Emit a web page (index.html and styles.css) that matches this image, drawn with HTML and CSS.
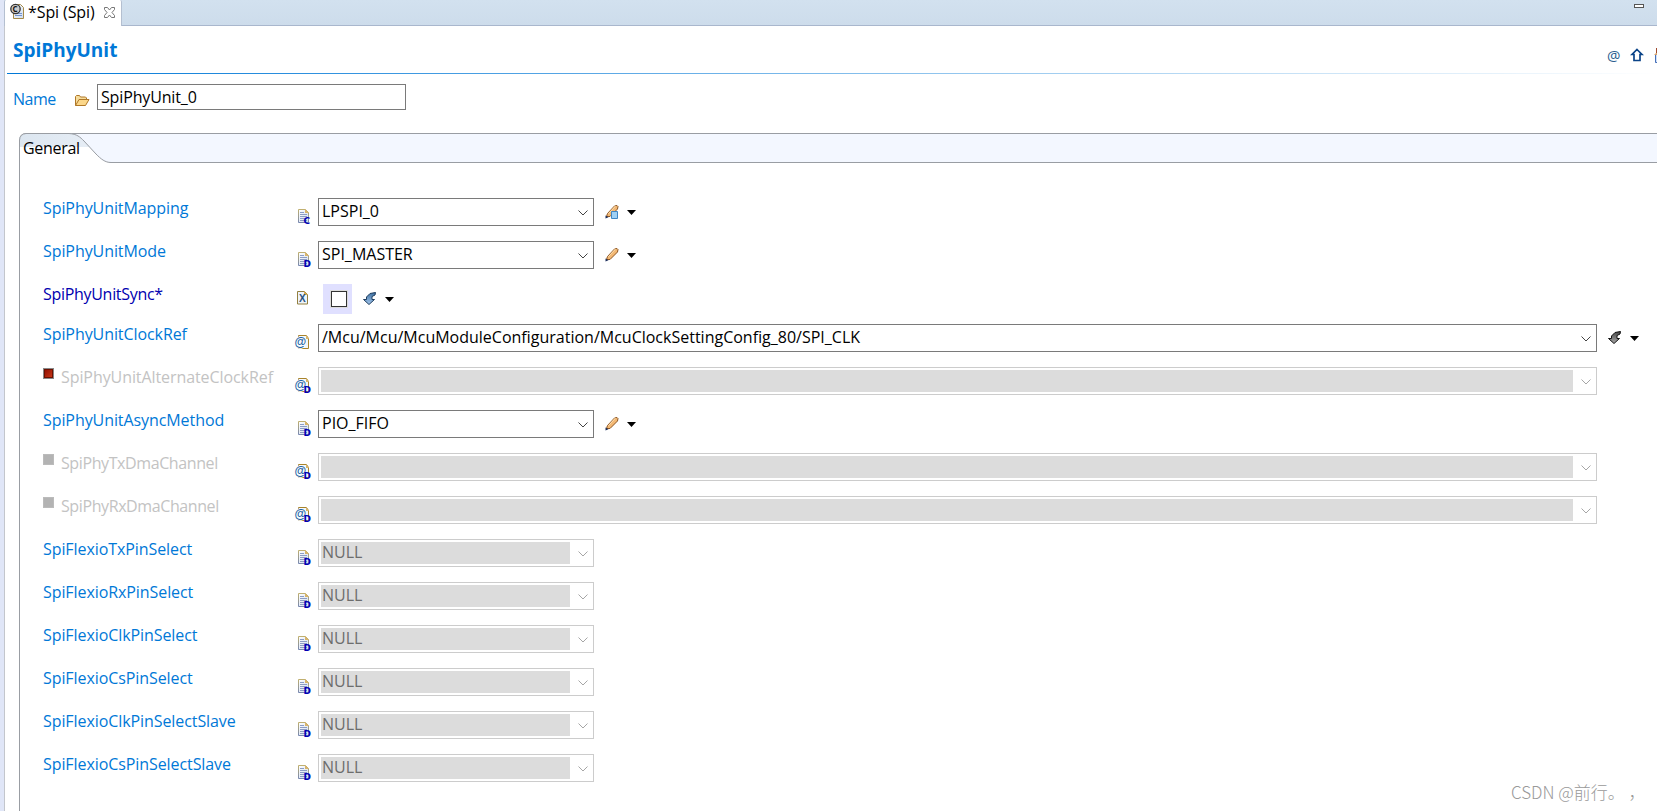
FILE: index.html
```html
<!doctype html>
<html lang="en">
<head>
	<meta charset="utf-8">
	<meta name="viewport" content="width=device-width, initial-scale=1">
	<title>*Spi (Spi)</title>
	<link rel="stylesheet" href="styles.css">
</head>
<body>

<svg class="defs" width="0" height="0">
	<defs>
		<linearGradient id="paper" x1="0" y1="0" x2="1" y2="1">
			<stop offset="0" stop-color="#ffffff"/><stop offset="1" stop-color="#cfdcee"/>
		</linearGradient>
		<linearGradient id="edge" x1="0" y1="0" x2="0" y2="1">
			<stop offset="0" stop-color="#c0b070"/><stop offset="1" stop-color="#7888b0"/>
		</linearGradient>
		<linearGradient id="tabfill" x1="0" y1="0" x2="1" y2="0">
			<stop offset="0" stop-color="#dce6f0"/><stop offset="1" stop-color="#e6edf5"/>
		</linearGradient>
		<linearGradient id="blue" x1="0" y1="0" x2="0" y2="1">
			<stop offset="0" stop-color="#3c6ea0"/><stop offset="1" stop-color="#a4c8ee"/>
		</linearGradient>
		<linearGradient id="dark" x1="0" y1="0" x2="0" y2="1">
			<stop offset="0" stop-color="#444"/><stop offset="1" stop-color="#aaa"/>
		</linearGradient>
	</defs>
	<symbol id="i-doc" viewBox="0 0 16 16">
		<path d="M3.5 1.5h7l3 3v10h-10z" fill="url(#paper)" stroke="url(#edge)"/>
		<path d="M10 1l4 4h-4z" fill="#d8b46a"/>
		<path d="M5 4.5h4M5 6.5h7M5 8.5h7M5 10.5h7M5 12.5h7" stroke="#8c9cc4"/>
	</symbol>
	<symbol id="i-page" viewBox="0 0 16 16">
		<path d="M3.5 1.5h8l2 3v10h-10z" fill="#f2f5fa"/>
		<path d="M3.5 3.5v-2h8l2 3v10h-10v-2" fill="none" stroke="#a8842c"/>
		<path d="M11 1l3 4h-3z" fill="#d8b46a"/>
	</symbol>
	<symbol id="i-x" viewBox="0 0 16 16">
		<path d="M2.5 1.5h7l3 3v9.500h-10z" fill="#edf3fb" stroke="#93803f"/>
		<path d="M9 1l4 4h-4z" fill="#d8a850"/>
	</symbol>
	<symbol id="i-pencil" viewBox="0 0 16 16">
		<path d="M2.5 12.5l1-3 7-7.500 2.500-.5 1 1-.5 2.500-7.500 7.500z" fill="#f3b874" stroke="#8d5622"/>
		<path d="M4.500 9.500l7-7.500" stroke="#ffe2b4"/>
		<path d="M1.500 14.500v-3l3 1.700z" fill="#1c2e5c"/>
	</symbol>
	<symbol id="i-bolt" viewBox="0 0 16 16">
		<path d="M4.500 8.500V6L8 2.500l5.500-1-.5 2.500-3 1.500v3h2.500L7 13.500 1.500 8.500z"/>
	</symbol>
	<symbol id="i-chevron" viewBox="0 0 10 6">
		<path d="M.5.5L5 5 9.500.5" fill="none" stroke="currentColor"/>
	</symbol>
	<symbol id="i-arrow" viewBox="0 0 9 5"><path d="M0 0h9L4.500 5z"/></symbol>
</svg>

<div class="editor">
	<header class="tabbar">
		<div class="tab">
			<svg class="tab-icon" viewBox="0 0 16 16">
				<path d="M4.500 1.500h7l3 3v11h-10z" fill="url(#paper)" stroke="#a58a48"/>
				<path d="M6 10.500h7M6 12.500h7" stroke="#7294d0"/>
				<circle cx="6.500" cy="6" r="4.700" fill="#ccc" stroke="#333" stroke-width="1.300"/>
				<text x="3.500" y="9" font-size="8" font-weight="700" fill="#111">C</text>
			</svg>
			<span>*Spi (Spi)</span>
			<svg class="tab-close" viewBox="0 0 11 11"><path d="M.5.5h3l2 2.500 2-2.500h3v2L8 5.500l2.500 3v2h-3l-2-2.500-2 2.500h-3v-2L3 5.500.5 2.500z" fill="#fff" stroke="#777"/></svg>
		</div>
		<i class="minimize"></i>
	</header>

	<div class="heading">
		<h1>SpiPhyUnit</h1>
		<div class="heading-tools">
			<span class="at">@</span>
			<svg class="up" viewBox="0 0 14 14"><path d="M7 1.500l5 5H10v6H4v-6H2z" fill="#fff" stroke="#0b4488" stroke-width="1.700"/></svg>
			<svg class="home" viewBox="0 0 14 16"><path d="M1.500 7.500h11v8h-11z" fill="#cfe0fa" stroke="#4670b8"/><path d="M0 8l7-7 7 7z" fill="#d8a46c"/><path d="M2 1h2v5H2z" fill="#a04a30"/></svg>
		</div>
	</div>
	<div class="rule"></div>

	<div class="name-row">
		<label for="name">Name</label>
		<svg class="folder" viewBox="0 0 16 13">
			<path d="M1.500 11.500v-9l1-1h3l1 1.500h5l1 1v2" fill="#f6dc9c" stroke="#b07828"/>
			<path d="M1.500 11.500l3.500-6h10l-3.500 6z" fill="#fbd78a" stroke="#b07828"/>
		</svg>
		<input id="name" class="name-input" type="text" value="SpiPhyUnit_0">
	</div>

	<div class="folder-tabs">
		<svg class="tab-shape" viewBox="0 0 95 30">
			<path d="M0 30V7L6 1H50C58 1 61 4 65 8L77 21C82 26 86 29.500 92 29.500H95V30z" fill="#fff"/>
			<path d="M.5 14V7Q1 1 7 .5H50C58 1 61 4 65 8L71 14z" fill="url(#tabfill)"/>
			<path d="M.5 30V7Q1 1 7 .5H50C58 1 61 4 65 8L77 21C82 26 86 29.500 92 29.500H95" fill="none" stroke="#999da3"/>
		</svg>
		<span class="general">General</span>
	</div>

	<main id="form" class="form"></main>
</div>

<div class="watermark">CSDN @前行。 ，</div>

<script>
const fields = [
	{label: "SpiPhyUnitMapping", icon: "doc", mark: "C", value: "LPSPI_0", tool: "calc"},
	{label: "SpiPhyUnitMode", icon: "doc", mark: "D", value: "SPI_MASTER", tool: "pencil"},
	{label: "SpiPhyUnitSync*", icon: "x", check: true, tool: "bolt"},
	{label: "SpiPhyUnitClockRef", icon: "page", value: "/Mcu/Mcu/McuModuleConfiguration/McuClockSettingConfig_80/SPI_CLK", wide: true, tool: "bolt"},
	{label: "SpiPhyUnitAlternateClockRef", icon: "page", mark: "D", value: "", wide: true, off: true, box: "red"},
	{label: "SpiPhyUnitAsyncMethod", icon: "doc", mark: "D", value: "PIO_FIFO", tool: "pencil"},
	{label: "SpiPhyTxDmaChannel", icon: "page", mark: "D", value: "", wide: true, off: true, box: "grey"},
	{label: "SpiPhyRxDmaChannel", icon: "page", mark: "D", value: "", wide: true, off: true, box: "grey"},
	{label: "SpiFlexioTxPinSelect", icon: "doc", mark: "D", value: "NULL", off: true},
	{label: "SpiFlexioRxPinSelect", icon: "doc", mark: "D", value: "NULL", off: true},
	{label: "SpiFlexioClkPinSelect", icon: "doc", mark: "D", value: "NULL", off: true},
	{label: "SpiFlexioCsPinSelect", icon: "doc", mark: "D", value: "NULL", off: true},
	{label: "SpiFlexioClkPinSelectSlave", icon: "doc", mark: "D", value: "NULL", off: true},
	{label: "SpiFlexioCsPinSelectSlave", icon: "doc", mark: "D", value: "NULL", off: true}
];

function typeIcon(f) {
	let extra = "";
	if (f.icon == "page") extra += '<text class="ref" x="-.5" y="12">@</text>';
	if (f.icon == "x") extra += '<text class="x" x="4" y="12">X</text>';
	if (f.mark) extra += '<text class="mark" x="8.500" y="15.500">' + f.mark + '</text>';
	return '<svg class="type" viewBox="0 0 16 16"><use href="#i-' + f.icon + '"/>' + extra + '</svg>';
}

function control(f) {
	if (f.check) return '<span class="check"><i></i></span>';
	return '<div class="combo' + (f.wide ? " wide" : "") + (f.off ? " off" : "") + '"><span>' + f.value +
		'</span><svg class="chevron"><use href="#i-chevron"/></svg></div>';
}

function tools(f) {
	if (!f.tool) return "";
	let name = f.tool == "calc" ? "pencil" : f.tool;
	let extra = f.tool == "calc" ? '<path d="M7.500 7.500h6v7h-6z" fill="#9fd0f4" stroke="#3f86c4"/>' : "";
	return '<div class="tools"><svg class="tool ' + f.tool + (f.wide ? " dark" : "") + '" viewBox="0 0 16 16"><use href="#i-' + name + '"/>' +
		extra + '</svg><svg class="arrow"><use href="#i-arrow"/></svg></div>';
}

document.querySelector("#form").innerHTML = fields.map(f =>
	'<div class="field' + (f.check ? " sync" : "") + (f.box ? " optional" : "") + '">' +
	'<div class="label">' + (f.box ? '<i class="box ' + f.box + '"></i>' : "") + '<span>' + f.label + '</span></div>' +
	typeIcon(f) + control(f) + tools(f) + '</div>'
).join("");
</script>
</body>
</html>
```
FILE: styles.css
```css
* {
	box-sizing: border-box;
}

body {
	margin: 0;
	height: 811px;
	overflow: hidden;
	background: #fff;
	color: #000;
	font: 16px/22px "Open Sans", "Noto Sans", "Noto Sans CJK SC", sans-serif;
}

svg {
	display: block;
	flex: none;
}

.defs {
	position: absolute;
}

.editor {
	height: 811px;
	border-left: 4px solid #e0e6f7;
	box-shadow: inset 1px 0 #c3c6cc;
	overflow: hidden;
}

.tabbar {
	display: flex;
	justify-content: space-between;
	height: 26px;
	padding-right: 13px;
	background: linear-gradient(#d2e1ef, #cddceb);
	box-shadow: inset 0 -1px #a9b7cd;
}

.tab {
	display: flex;
	width: 118px;
	padding-left: 4px;
	background: #fff;
	border: solid #b4bfd0;
	border-width: 0 1px;
	border-radius: 2px 2px 0 0;
	line-height: 25px;
	letter-spacing: -.1px;
}

.tab span {
	width: 76px;
	margin-left: 3px;
	white-space: nowrap;
}

.tab-icon {
	width: 16px;
	height: 16px;
	margin-top: 3px;
}

.tab-close {
	width: 11px;
	height: 11px;
	margin-top: 7px;
}

.minimize {
	width: 10px;
	height: 4px;
	margin-top: 4px;
	border: 1px solid #555;
	background: #fff;
}

.heading {
	display: flex;
	justify-content: space-between;
	height: 47px;
	padding-left: 9px;
}

h1 {
	margin: 11px 0 0;
	color: #0078d7;
	font-size: 19px;
	line-height: 26px;
}

.heading-tools {
	display: flex;
	width: 50px;
	padding-top: 22px;
	overflow: hidden;
}

.at {
	flex: none;
	width: 23px;
	margin-top: -4px;
	color: #2c6090;
	font-size: 15px;
}

.up {
	width: 14px;
	height: 14px;
}

.home {
	width: 14px;
	height: 16px;
	margin: -1px 0 0 10px;
}

.rule {
	height: 1px;
	margin-left: 3px;
	background: linear-gradient(90deg, #0078d7, #fff);
}

.name-row {
	display: flex;
	height: 59px;
	padding: 10px 0 0 9px;
	color: #0078d7;
}

.name-row label {
	width: 61px;
	padding-top: 4px;
	letter-spacing: -.5px;
}

.folder {
	width: 16px;
	height: 13px;
	margin: 10px 7px 0 0;
}

.name-input {
	width: 309px;
	height: 26px;
	padding: 0 3px;
	border: 1px solid #7a7a7a;
	font: inherit;
	letter-spacing: -.15px;
}

.folder-tabs {
	display: flex;
	height: 30px;
	margin-left: 15px;
	border: solid #999da3;
	border-width: 1px 0;
	border-top-left-radius: 7px;
	background: #f3f7ff;
}

.tab-shape {
	width: 95px;
	height: 30px;
	margin-top: -1px;
}

.general {
	margin: 3px 0 0 -91px;
	letter-spacing: -.3px;
	z-index: 1;
}

.form {
	height: 660px;
	margin-left: 15px;
	padding: 35px 0 0 23px;
	border-left: 1px solid #999da3;
}

.field {
	display: flex;
	height: 43px;
}

.field.sync {
	height: 40px;
}

.label {
	display: flex;
	width: 252px;
	margin-top: -1px;
	color: #0078d7;
	letter-spacing: -.08px;
	white-space: nowrap;
}

.sync .label {
	color: #0000b0;
	letter-spacing: -.3px;
}

.optional .label {
	color: #c3c3c3;
}

.box {
	width: 11px;
	height: 11px;
	margin: 2px 7px 0 0;
	border: 1px solid #bbb;
	background: #b3b3b3;
}

.box.grey + span {
	letter-spacing: -.4px;
}

.box.red {
	border-color: #888;
	background: linear-gradient(135deg, #8c0c00, #cc3a18);
	box-shadow: inset 0 0 0 1px #6c1000;
}

.type {
	width: 16px;
	height: 16px;
	margin: 10px 7px 0 0;
	overflow: visible;
}

.sync .type {
	margin: 6px 12px 0 0;
}

.mark {
	font: bold 9px "DejaVu Sans", sans-serif;
	fill: #0000b4;
}

.ref {
	font: bold 12px "Liberation Sans", sans-serif;
	fill: #1e64a4;
	stroke: #fff;
	stroke-width: 1.5px;
	paint-order: stroke;
}

.x {
	font: bold 10px "Liberation Sans", sans-serif;
	fill: #26507c;
}

.combo {
	display: flex;
	justify-content: space-between;
	width: 276px;
	height: 28px;
	padding: 2px 5px 2px 2px;
	border: 1px solid #7a7a7a;
	color: #000;
}

.combo.wide {
	width: 1279px;
}

.combo span {
	flex: 1;
	margin-right: 8px;
	padding-left: 1px;
	line-height: 21px;
	white-space: nowrap;
}

.chevron {
	width: 10px;
	height: 6px;
	margin-top: 9px;
	color: #444;
}

.combo.off {
	border-color: #ccc;
	color: #6d6d6d;
}

.combo.off span {
	background: #dcdcdc;
}

.off .chevron {
	color: #a6a6a6;
}

.check {
	width: 29px;
	height: 30px;
	padding: 7px 0 0 8px;
	background: #e0e0ff;
}

.check i {
	display: block;
	width: 16px;
	height: 16px;
	border: 1px solid #333;
	background: #fff;
	box-shadow: 0 0 0 1px #dcdcdc;
}

.tools {
	display: flex;
	padding: 6px 0 0 10px;
}

.tool {
	width: 16px;
	height: 16px;
}

.bolt {
	fill: url(#blue);
	stroke: #1d3c5e;
}

.bolt.dark {
	fill: url(#dark);
	stroke: #111;
}

.arrow {
	width: 9px;
	height: 5px;
	margin: 6px 0 0 7px;
}

.sync .tools {
	padding-top: 7px;
}

.watermark {
	position: absolute;
	left: 1511px;
	top: 780px;
	color: #999;
	font: 17px/24px "Noto Sans CJK SC", sans-serif;
	font-weight: 300;
	text-spacing-trim: space-all;
	white-space: nowrap;
}
```
